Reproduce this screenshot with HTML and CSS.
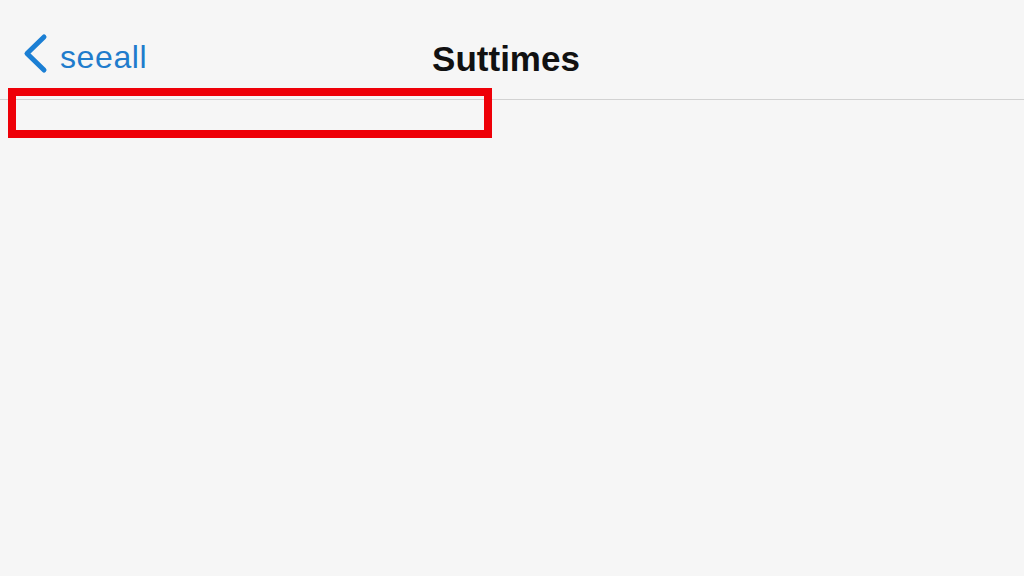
FILE: index.html
```html
<!DOCTYPE html>
<html lang="en">
<head>
<meta charset="utf-8">
<title>Suttimes</title>
<link rel="stylesheet" href="styles.css">
</head>
<body>
<div class="page">
  <header class="navbar">
    <a class="back" href="#">
      <svg class="chevron" width="28" height="42" viewBox="0 0 28 42" aria-hidden="true">
        <path d="M24 4 L7 20.5 L24 37" fill="none" stroke="#1b7fd4" stroke-width="5" stroke-linecap="round" stroke-linejoin="round"/>
      </svg>
      <span class="back-label">seeall</span>
    </a>
    <h1 class="title">Suttimes</h1>
    <div class="spacer"></div>
  </header>
  <main class="content"></main>
  <div class="highlight"></div>
</div>
</body>
</html>
```
FILE: styles.css
```css
html, body {
  margin: 0;
  padding: 0;
  background: #f6f6f6;
}

.page {
  position: relative;
  width: 1024px;
  height: 576px;
  overflow: hidden;
  font-family: "Liberation Sans", Arial, sans-serif;
}

.navbar {
  display: grid;
  grid-template-columns: 1fr auto 1fr;
  align-items: center;
  height: 100px;
  box-sizing: border-box;
  border-bottom: 1.5px solid #d2d2d2;
  padding: 0 0 0 20px;
}

.back {
  display: flex;
  align-items: center;
  gap: 12px;
  text-decoration: none;
  color: #1f7ccc;
  margin-top: 8px;
}

.chevron {
  display: block;
  margin-top: 0;
}

.back-label {
  font-size: 32px;
  letter-spacing: 0.6px;
  line-height: 1;
  position: relative;
  top: 3px;
}

.title {
  margin: 18px 32px 0 0;
  font-size: 35px;
  font-weight: bold;
  color: #111111;
  line-height: 1;
}

.content {
  flex: 1;
}

.highlight {
  position: absolute;
  left: 8px;
  top: 88px;
  width: 484px;
  height: 50px;
  box-sizing: border-box;
  border: 8.5px solid #ee0008;
}
```
